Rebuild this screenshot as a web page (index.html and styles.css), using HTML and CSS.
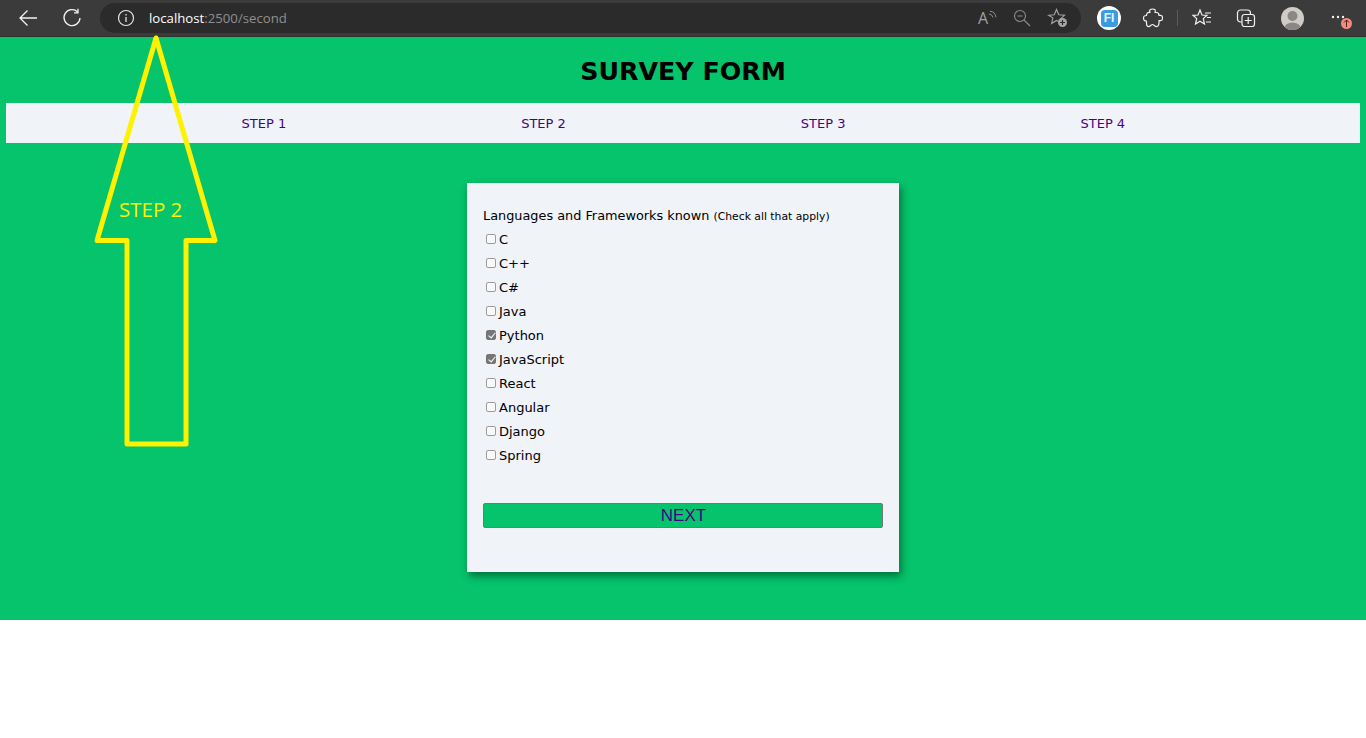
FILE: index.html
```html
<!DOCTYPE html>
<html lang="en">
<head>
<meta charset="utf-8">
<title>Survey Form</title>
<link rel="stylesheet" href="styles.css">
</head>
<body>
<header class="browser">
  <button class="tool back" aria-label="Back"><svg width="20" height="20" viewBox="0 0 20 20"><path d="M19 10H2M9.500 2.500 2 10l7.500 7.500" fill="none" stroke="#f2f2f2" stroke-width="1.300"/></svg></button>
  <button class="tool reload" aria-label="Refresh"><svg width="20" height="20" viewBox="0 0 20 20"><path d="M15.500 3.800A8 8 0 1 0 18 10M16 .8v4h-4" fill="none" stroke="#f2f2f2" stroke-width="1.300"/></svg></button>
  <div class="address">
    <svg class="info" width="18" height="18" viewBox="0 0 18 18"><circle cx="9" cy="9" r="7.500" fill="none" stroke="#e6e6e6" stroke-width="1.200"/><path d="M9 8v5M9 5v1.400" stroke="#e6e6e6" stroke-width="1.300"/></svg>
    <span class="url"><b>localhost</b>:2500/second</span>
    <span class="addr-icons">
      <span class="read">A<svg width="9" height="9" viewBox="0 0 9 9"><path d="M1 4q3 0 4 3.500M2 1.300q5 0 6 6" fill="none" stroke="#8d8d8d"/></svg></span>
      <svg class="zoom-out" width="18" height="18" viewBox="0 0 18 18"><circle cx="7" cy="7" r="5.500" fill="none" stroke="#8d8d8d" stroke-width="1.100"/><path d="M4.500 7h5M11 11l6 6" stroke="#8d8d8d" stroke-width="1.100"/></svg>
      <svg class="star-add" width="22" height="22" viewBox="0 0 22 22"><path d="M9.500 2.500l2.300 5.300 5.700.5-4.300 3.800 1.200 3.900-4.900-2.500-4.900 3 1.300-5.600L1.700 8.300l5.600-.5z" fill="none" stroke="#a5a5a5" stroke-width="1.100"/><circle cx="15.500" cy="15.500" r="4.500" fill="#a5a5a5"/><path d="M13 15.500h5M15.500 13v5" stroke="#2b2b2b" stroke-width="1.200"/></svg>
    </span>
  </div>
  <div class="ext-icons">
    <span class="fi"><span>FI</span></span>
    <svg class="puzzle" width="20" height="20" viewBox="0 0 20 20"><path d="M7 4.500C6 1.500 7.500 1 9.500 1S13 1.500 12 4.500H13.500C15.500 4.500 16 5.500 16 7.500C19 6.800 19.500 8.500 19.500 10S19 13.200 16 12.500C16 15 16.500 18 14 18.500C12 19 11 16.500 9.500 16.500S7 19 5 18.500C3 18 3.500 15 3.500 13C1 13 .5 11.500 .5 10S1.500 7.300 3.500 7.500C3.500 5.500 4.500 4 7 4.500Z" fill="none" stroke="#f2f2f2" stroke-width="1.200" stroke-linejoin="round"/></svg>
    <i class="sep"></i>
    <svg class="favs" width="20" height="20" viewBox="0 0 20 20"><path d="M8 2l2 5 5 .3-3.700 3.300L12.500 16 8 13.200 3.500 16l1.200-5.400L1 7.300 6 7z" fill="none" stroke="#f2f2f2" stroke-width="1.200"/><path d="M13 5h6M15 9.500h4M14 14h5" stroke="#f2f2f2" stroke-width="1.200"/></svg>
    <svg class="collections" width="20" height="20" viewBox="0 0 20 20"><rect x="1.500" y="2" width="13" height="12" rx="3" fill="none" stroke="#f2f2f2" stroke-width="1.200"/><rect x="6" y="6.500" width="12.500" height="12" rx="2.500" fill="#3b3b3b" stroke="#f2f2f2" stroke-width="1.200"/><path d="M12.200 9v7M8.700 12.500h7" stroke="#f2f2f2" stroke-width="1.200"/></svg>
    <svg class="avatar" width="23" height="23" viewBox="0 0 23 23"><defs><clipPath id="av"><circle cx="11.500" cy="11.500" r="11.500"/></clipPath></defs><circle cx="11.500" cy="11.500" r="11.500" fill="#cfcbc7"/><g clip-path="url(#av)" fill="#8b8784"><circle cx="11.500" cy="9" r="5"/><ellipse cx="11.500" cy="21" rx="8" ry="5.500"/></g></svg>
    <span class="more"><svg width="14" height="4" viewBox="0 0 14 4"><circle cx="2" cy="2" r="1.200" fill="#f2f2f2"/><circle cx="7" cy="2" r="1.200" fill="#f2f2f2"/><circle cx="12" cy="2" r="1.200" fill="#f2f2f2"/></svg><span class="badge"><svg width="7" height="8" viewBox="0 0 7 8"><path d="M3.500 8V1M1 3.500l2.500-2.500L6 3.500" fill="none" stroke="#5a1c14"/></svg></span></span>
  </div>
</header>
<main class="page">
  <h1 class="title">SURVEY FORM</h1>
  <nav class="steps">
    <a class="step" href="#">STEP 1</a>
    <a class="step" href="#">STEP 2</a>
    <a class="step" href="#">STEP 3</a>
    <a class="step" href="#">STEP 4</a>
  </nav>
  <form class="card">
    <p class="question">Languages and Frameworks known <small>(Check all that apply)</small></p>
    <label class="option"><input type="checkbox">C</label>
    <label class="option"><input type="checkbox">C++</label>
    <label class="option"><input type="checkbox">C#</label>
    <label class="option"><input type="checkbox">Java</label>
    <label class="option"><input type="checkbox" checked>Python</label>
    <label class="option"><input type="checkbox" checked>JavaScript</label>
    <label class="option"><input type="checkbox">React</label>
    <label class="option"><input type="checkbox">Angular</label>
    <label class="option"><input type="checkbox">Django</label>
    <label class="option"><input type="checkbox">Spring</label>
    <button class="next" type="button">NEXT</button>
  </form>
</main>
<div class="annotation">
  <svg width="140" height="420" viewBox="0 0 140 420"><path d="M70 5 129 207.500H100V411H41V207.500H11z" fill="none" stroke="#fff200" stroke-width="5" stroke-linejoin="round"/></svg>
  <span class="annotation-label">STEP 2</span>
</div>
</body>
</html>
```
FILE: styles.css
```css
* { box-sizing: border-box; }
html, body { margin: 0; padding: 0; }
body { height: 738px; background: #fff; font-family: "DejaVu Sans", Verdana, sans-serif; overflow: hidden; position: relative; }

.browser { height: 37px; background: #3b3b3b; display: flex; align-items: center; border-bottom: 1px solid #2f2f2f; }
.tool { width: 20px; height: 20px; padding: 0; border: 0; background: none; display: flex; }
.back { margin-left: 18px; }
.reload { margin-left: 24px; }
.address { margin-left: 18px; width: 981px; height: 30px; border-radius: 15px; background: #2b2b2b; display: flex; align-items: center; padding-left: 17px; }
.url { margin-left: 14px; font: 13.200px "Open Sans", "Segoe UI", sans-serif; color: #8f8f8f; }
.url b { font-weight: 400; color: #fff; }
.addr-icons { margin-left: auto; margin-right: 12px; display: flex; align-items: center; }
.read { position: relative; color: #a0a0a0; font: 400 16px/20px "Open Sans", sans-serif; width: 19px; }
.read svg { position: absolute; right: 0; top: 2px; }
.zoom-out { margin-left: 16px; }
.star-add { margin-left: 16px; }
.ext-icons { margin-left: 16px; display: flex; align-items: center; }
.fi { width: 24px; height: 24px; border-radius: 50%; background: #fff; display: flex; align-items: center; justify-content: center; }
.fi span { width: 17px; height: 17px; border-radius: 4px; background: #3b9be0; color: #e8f4ff; font: 700 12px/17px "Liberation Sans", sans-serif; text-align: center; }
.puzzle { margin-left: 22px; }
.sep { width: 1px; height: 16px; background: #5c5c5c; margin-left: 14px; }
.favs { margin-left: 14px; }
.collections { margin-left: 24px; }
.avatar { margin-left: 25px; }
.more { position: relative; margin-left: 27px; width: 20px; height: 20px; display: block; padding-top: 7px; }
.more svg { display: block; }
.badge { position: absolute; left: 9.500px; top: 9.500px; width: 11px; height: 11px; border-radius: 50%; background: #f28b82; display: flex; align-items: center; justify-content: center; }

.page { height: 583px; background: #05c46b; padding: 0 6px; display: flow-root; }
.title { margin: 19px 0 15px; height: 32px; font-size: 25.300px; line-height: 32px; text-align: center; color: #000; }
.steps { height: 40px; background: #f0f3f8; display: grid; grid-template-columns: repeat(4, 279.670px); justify-items: center; align-items: center; padding-left: 118px; }
.step { font-size: 13px; color: #4b0082; text-decoration: none; }

.card { width: 432px; height: 389px; margin: 40px auto 0; background: #f0f3f8; padding: 24px 16px 0; box-shadow: 2px 4px 8px rgba(0, 0, 0, .45); display: flex; flex-direction: column; }
.question { margin: 0; height: 20px; line-height: 18px; font-size: 12.850px; color: #000; }
.question small { font-size: 10.800px; }
.option { height: 24px; display: flex; align-items: center; font-size: 13px; color: #000; }
.option input { appearance: none; position: relative; width: 10px; height: 10px; margin: 0 3px; background: #fafafa; border: 1px solid #9c9c9c; border-radius: 2px; }
.option input:checked { background: #767676; border-color: #767676; }
.option input:checked::after { content: ""; position: absolute; left: 2.500px; top: 0; width: 3px; height: 6px; border: solid #fff; border-width: 0 1.500px 1.500px 0; transform: rotate(40deg); }
.next { width: 400px; height: 25px; margin-top: 36px; padding: 1px 0 0 1px; background: #05c46b; border: 1px solid #767676; border-radius: 2px; font: 17px/22px "Liberation Sans", sans-serif; color: #4b0082; }

.annotation { position: absolute; left: 86px; top: 33px; width: 140px; height: 420px; }
.annotation svg { display: block; }
.annotation-label { position: absolute; left: 33px; top: 164px; font: 20.500px/24px "Open Sans", sans-serif; color: #fff200; white-space: nowrap; }
```
